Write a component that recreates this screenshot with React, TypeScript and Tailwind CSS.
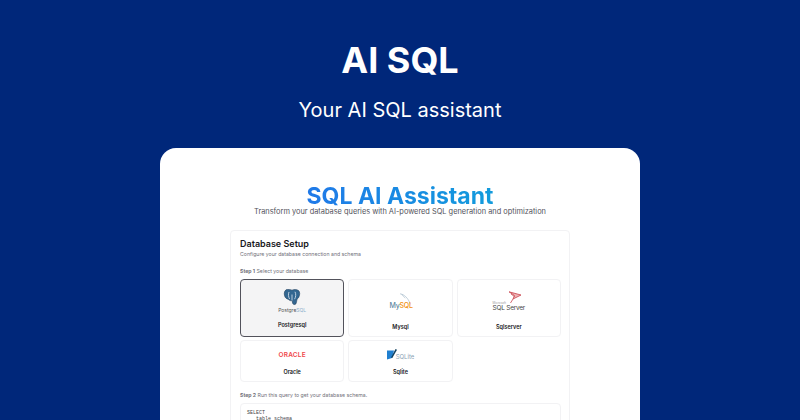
import React from 'react';

function PostgresLogo() {
  return (
    <div className="flex flex-col items-center">
      <svg width="18" height="17" viewBox="0 0 18 17">
        <path d="M3 .8C5.500.2 7.500.5 9 1.200 11 .2 13.500.3 15.500 1.500c1.600 1.500 1.400 4.200.5 6.200-.6 1.400-1.200 2-2 2.300-.4 2-.4 3.800-1.200 5-1 .9-2.500.7-3-.4-.5-.9-.4-2-.6-3.100-1.200.4-2.700.2-3.600-.9C4.600 9.800 3.200 9.800 2.200 8.200.9 6 .8 2.500 3 .8z" fill="#336791" stroke="#20415f" strokeWidth="0.6" />
        <path d="M6 3c-1 2.300-.6 5 .6 7M12 2.800c1.200 2.300.8 5.200-.4 7.400M9 5.500v6" stroke="#dfe9f1" strokeWidth="0.8" fill="none" />
      </svg>
      <span className="mt-[1px] text-[5px] leading-[7px] text-[#555]">Postgre<span className="text-[#8fb0cc]">SQL</span></span>
    </div>
  );
}

function MysqlLogo() {
  return (
    <div className="relative h-[17px] w-[22px]">
      <svg className="absolute left-[10px] top-0" width="13" height="12" viewBox="0 0 13 12">
        <path d="M1 .8c4 .4 8 4 10.500 10.500M2.500 1c1 1.800 2.500 2.800 3.800 4" stroke="#a9bdcb" strokeWidth="0.7" fill="none" />
      </svg>
      <span className="absolute bottom-0 left-0 text-[7px] font-medium leading-[8px] tracking-[-0.2px] text-[#5d87a1]">My<span className="text-[#f29111]">SQL</span></span>
    </div>
  );
}

function SqlServerLogo() {
  return (
    <div className="flex flex-col items-center">
      <svg className="ml-[12px]" width="14" height="13" viewBox="0 0 14 13">
        <path d="M1 .8l12 3.200-8 4 1.500-3.500zM5 8l-2.500 4M3 3l3.500 2.500" stroke="#c9434b" strokeWidth="0.8" fill="#eeb4b6" />
      </svg>
      <span className="mt-[-3px] self-start text-[3px] leading-[4px] text-[#999]">Microsoft</span>
      <span className="text-[6.500px] leading-[7px] tracking-[-0.25px] text-[#444]">SQL Server</span>
    </div>
  );
}

function SqliteLogo() {
  return (
    <div className="flex items-end">
      <svg width="10" height="11" viewBox="0 0 10 11">
        <path d="M0 1.500h7L5 9 0 10.500z" fill="#1f7fd0" />
        <path d="M8.500 0L10 .8 5.300 9 4 8.500z" fill="#10405f" />
      </svg>
      <span className="ml-[-1px] text-[6px] leading-[7px] text-[#8aa2b4]">SQLite</span>
    </div>
  );
}

function DbCard({ name, logo, selected, short, tight }: { name: string; logo: React.ReactNode; selected?: boolean; short?: boolean; tight?: boolean }) {
  return (
    <div className={`flex flex-col items-center rounded-[4px] border ${short ? 'h-[42px]' : 'h-[58px]'} ${selected ? 'border-[#52525b] bg-[#f4f4f5]' : 'border-[#f2f2f4] bg-white'}`}>
      <div className={`flex w-full items-center justify-center ${short ? 'h-[27px]' : 'h-[43px]'}`}>{logo}</div>
      <span className={`text-[5.500px] font-semibold leading-[8px] text-[#18181b] ${tight ? 'mt-[-2px]' : ''}`}>{name}</span>
    </div>
  );
}

export default function App() {
  return (
    <div className="flex h-[420px] w-[800px] flex-col items-center overflow-hidden bg-[#00277a] font-['Inter',sans-serif]">
      <h1 className="mt-[37px] text-[36px] font-bold leading-[46px] text-white">AI SQL</h1>
      <p className="mt-[15px] text-[20px] font-normal leading-[24px] text-white">Your AI SQL assistant</p>
      <div className="mt-[26px] flex w-[480px] flex-1 flex-col items-center rounded-t-[16px] bg-white pt-[37px]">
        <h2 className="bg-gradient-to-r from-[#2079e8] to-[#139bdc] bg-clip-text text-[23px] font-bold leading-[22px] text-transparent">SQL AI Assistant</h2>
        <p className="text-[7.400px] leading-[10px] text-[#52525b]">Transform your database queries with AI-powered SQL generation and optimization</p>
        <div className="mt-[13px] w-[340px] flex-1 rounded-t-[4px] border border-[#f2f2f4] pl-[9px] pr-[8px] pt-[6px]">
          <h3 className="text-[9px] font-semibold leading-[13px] text-[#18181b]">Database Setup</h3>
          <p className="text-[5.200px] leading-[8px] text-[#71717a]">Configure your database connection and schema</p>
          <p className="mt-[9px] text-[5.200px] leading-[8px] text-[#71717a]"><span className="font-bold">Step 1</span> Select your database</p>
          <div className="mt-[4px] grid grid-cols-3 gap-x-[4px] gap-y-[3px]">
            <DbCard name="Postgresql" selected tight logo={<PostgresLogo />} />
            <DbCard name="Mysql" logo={<MysqlLogo />} />
            <DbCard name="Sqlserver" logo={<SqlServerLogo />} />
            <DbCard name="Oracle" short logo={<span className="text-[6.500px] font-semibold leading-[8px] tracking-[0.2px] text-[#f0484c]">ORACLE</span>} />
            <DbCard name="Sqlite" short logo={<SqliteLogo />} />
          </div>
          <p className="mt-[9px] text-[5.200px] leading-[8px] text-[#71717a]"><span className="font-bold">Step 2</span> Run this query to get your database schema.</p>
          <div className="mt-[4px] h-[40px] rounded-[4px] border border-[#f2f2f4] px-[6px] pt-[6px]">
            <p className="font-['Liberation_Mono',monospace] text-[5px] leading-[6px] text-[#3f3f46]">SELECT</p>
            <p className="pl-[9px] font-['Liberation_Mono',monospace] text-[5px] leading-[6px] text-[#3f3f46]">table_schema</p>
          </div>
        </div>
      </div>
    </div>
  );
}
